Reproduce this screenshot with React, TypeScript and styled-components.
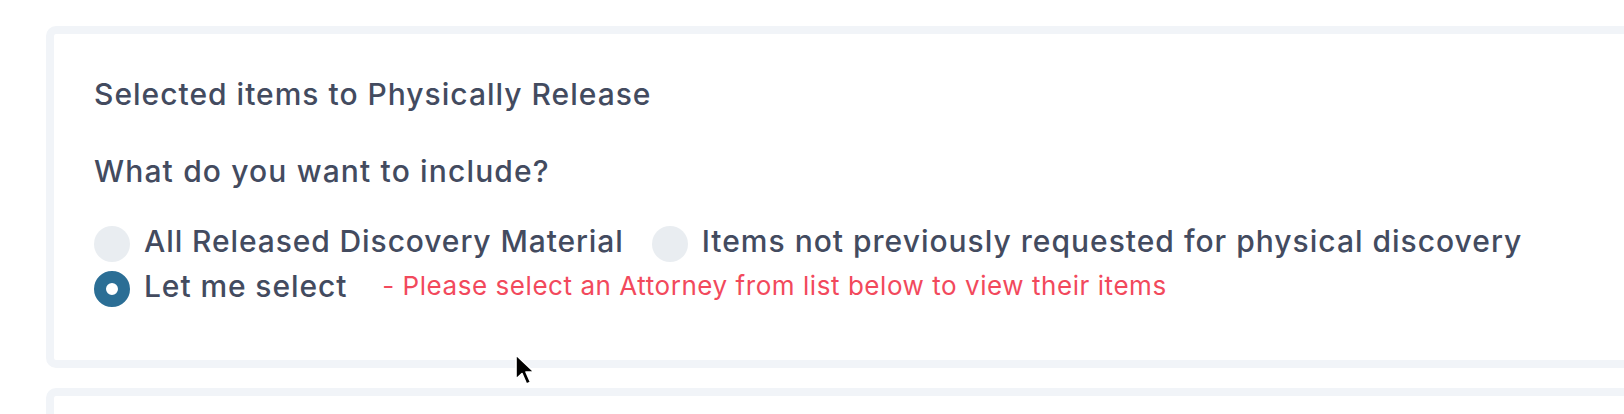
import React, { useState } from 'react';
import styled, { createGlobalStyle } from 'styled-components';

const GlobalStyle = createGlobalStyle`
  html, body {
    margin: 0;
    padding: 0;
    background: #ffffff;
    overflow: hidden;
  }
  body {
    font-family: Inter, 'Open Sans', 'Liberation Sans', sans-serif;
    color: #434b5f;
  }
`;

const Page = styled.main`
  position: relative;
  display: flex;
  flex-direction: column;
  gap: 20px;
  height: 414px;
  padding: 26px 0 0 46px;
  box-sizing: border-box;
  overflow: hidden;
`;

const Card = styled.section`
  flex-shrink: 0;
  margin-right: -80px;
  border: 8px solid #f1f4f8;
  border-radius: 10px;
  background: #ffffff;
  padding: 40px 40px 0;
  min-height: 342px;
  box-sizing: border-box;
`;

const EmptyCard = styled(Card)`
  min-height: 120px;
`;

const Heading = styled.h3`
  margin: 0;
  font-size: 30px;
  line-height: 40px;
  font-weight: 500;
  letter-spacing: 1px;
`;

const Question = styled.p`
  margin: 37px 0 0;
  font-size: 30px;
  line-height: 40px;
  font-weight: 500;
  letter-spacing: 1.15px;
`;

const RadioList = styled.div`
  display: flex;
  flex-direction: column;
  gap: 9px;
  margin-top: 35px;
`;

const RadioRow = styled.div`
  display: flex;
  align-items: flex-start;
  gap: 28px;
`;

const Option = styled.label`
  display: flex;
  align-items: flex-start;
  gap: 14px;
  cursor: pointer;
`;

const Dot = styled.span<{ $checked: boolean }>`
  flex-shrink: 0;
  width: 36px;
  height: 36px;
  border-radius: 50%;
  box-sizing: border-box;
  background: ${({ $checked }) => ($checked ? '#ffffff' : '#e9edf1')};
  border: ${({ $checked }) => ($checked ? '12px solid #2b6e95' : 'none')};
`;

const OptionText = styled.span<{ $spacing?: number }>`
  font-size: 30px;
  line-height: 30px;
  font-weight: 500;
  letter-spacing: ${({ $spacing }) => $spacing ?? 0.9}px;
  white-space: nowrap;
`;

const Hint = styled.span`
  margin-left: 7px;
  font-size: 26px;
  line-height: 30px;
  color: #f2495c;
  letter-spacing: 0.55px;
  white-space: nowrap;
`;

const Pointer = styled.svg`
  position: absolute;
  left: 514px;
  top: 354px;
  width: 22px;
  height: 32px;
`;

type Choice = 'all' | 'new' | 'select';

export default function App() {
  const [choice, setChoice] = useState<Choice>('select');

  return (
    <>
      <GlobalStyle />
      <Page>
        <Card>
          <Heading>Selected items to Physically Release</Heading>
          <Question>What do you want to include?</Question>
          <RadioList>
            <RadioRow>
              <Option onClick={() => setChoice('all')}>
                <Dot $checked={choice === 'all'} />
                <OptionText>All Released Discovery Material</OptionText>
              </Option>
              <Option onClick={() => setChoice('new')}>
                <Dot $checked={choice === 'new'} />
                <OptionText $spacing={1.0}>Items not previously requested for physical discovery</OptionText>
              </Option>
            </RadioRow>
            <RadioRow>
              <Option onClick={() => setChoice('select')}>
                <Dot $checked={choice === 'select'} />
                <OptionText>Let me select</OptionText>
              </Option>
              <Hint>- Please select an Attorney from list below to view their items</Hint>
            </RadioRow>
          </RadioList>
        </Card>
        <EmptyCard />
        <Pointer viewBox="0 0 22 32">
          <path
            d="M2 1 L2 25 L8 19.5 L12.5 30 L16.5 28.3 L12 18 L20 18 Z"
            fill="#000000"
            stroke="#ffffff"
            strokeWidth="1.6"
            strokeLinejoin="round"
          />
        </Pointer>
      </Page>
    </>
  );
}
